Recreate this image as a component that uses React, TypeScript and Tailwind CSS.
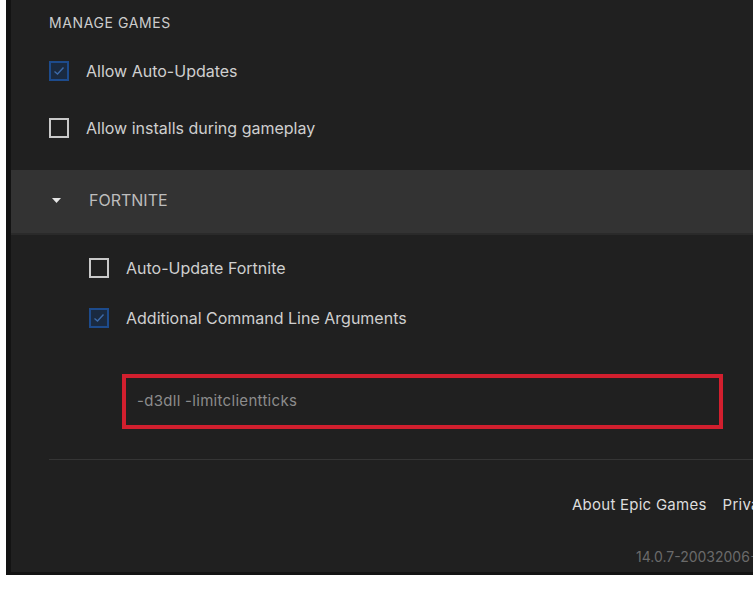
import React from "react";

const FONT = { fontFamily: "Inter, 'Noto Sans', sans-serif" };

function Checkbox({ checked }: { checked?: boolean }) {
  if (checked) {
    return (
      <div className="w-5 h-5 shrink-0 border-2 border-[#1d4b8c] bg-[#1a2a40] flex items-center justify-center">
        <svg width="12" height="10" viewBox="0 0 12 10" fill="none">
          <path d="M1.5 5.5 L4.5 8 L10.5 1.5" stroke="#3d6aa8" strokeWidth="1.4" />
        </svg>
      </div>
    );
  }
  return <div className="w-5 h-5 shrink-0 border-2 border-[#c9c9c9]" />;
}

function Row({ checked, label, className }: { checked?: boolean; label: string; className?: string }) {
  return (
    <div className={"h-5 flex items-center gap-[17px] " + (className ?? "")}>
      <Checkbox checked={checked} />
      <span className="text-[16px] leading-5 text-[#cfcfcf] whitespace-nowrap">{label}</span>
    </div>
  );
}

export default function App() {
  return (
    <div className="w-[753px] h-[607px] bg-white overflow-hidden" style={FONT}>
      <div className="ml-[6px] w-[747px] h-[575px] bg-[#202020] border-l-[5px] border-b-[3px] border-[#131313] overflow-hidden flex flex-col">
        <div className="pl-[38px] pt-[13px]">
          <div className="text-[14px] leading-5 text-[#cccccc] tracking-[0.6px]">MANAGE GAMES</div>
          <Row checked label="Allow Auto-Updates" className="mt-[28px]" />
          <Row label="Allow installs during gameplay" className="mt-[37px]" />
        </div>

        <div className="mt-[32px] h-[65px] shrink-0 bg-[#333333] border-b-2 border-[#2a2a2a] flex items-center pb-[3px]">
          <svg className="ml-[41px]" width="9" height="5" viewBox="0 0 9 5">
            <path d="M0 0 H9 L4.5 5 Z" fill="#e6e6e6" />
          </svg>
          <span className="ml-[28px] text-[16px] leading-5 text-[#bdbdbd]">FORTNITE</span>
        </div>

        <div className="pl-[78px]">
          <Row label="Auto-Update Fortnite" className="mt-[23px]" />
          <Row checked label="Additional Command Line Arguments" className="mt-[30px]" />
        </div>

        <div className="ml-[111px] mt-[46px] w-[601px] h-[55px] shrink-0 border-4 border-[#d21f2e] flex items-center pl-[11px]">
          <span className="text-[15px] tracking-[0.3px] text-[#8c8c8c]">-d3dll -limitclientticks</span>
        </div>

        <div className="ml-[38px] mt-[30px] h-px shrink-0 bg-[#353535]" />

        <div className="mt-[35px] h-5 pl-[561px] flex items-center whitespace-nowrap">
          <span className="text-[15px] leading-5 tracking-[0.25px] text-[#dddddd]">About Epic Games</span>
          <span className="ml-[9px] mr-[7px] w-[2px] h-[21px] bg-[#8a8a8a]" />
          <span className="text-[15px] leading-5 tracking-[0.25px] text-[#dddddd]">Privacy Policy</span>
        </div>

        <div className="mt-[32px] pl-[625px] whitespace-nowrap text-[14px] leading-5 text-[#6a6a6a]">
          14.0.7-20032006+++Portal+Release-Live-Windows
        </div>
      </div>
    </div>
  );
}
